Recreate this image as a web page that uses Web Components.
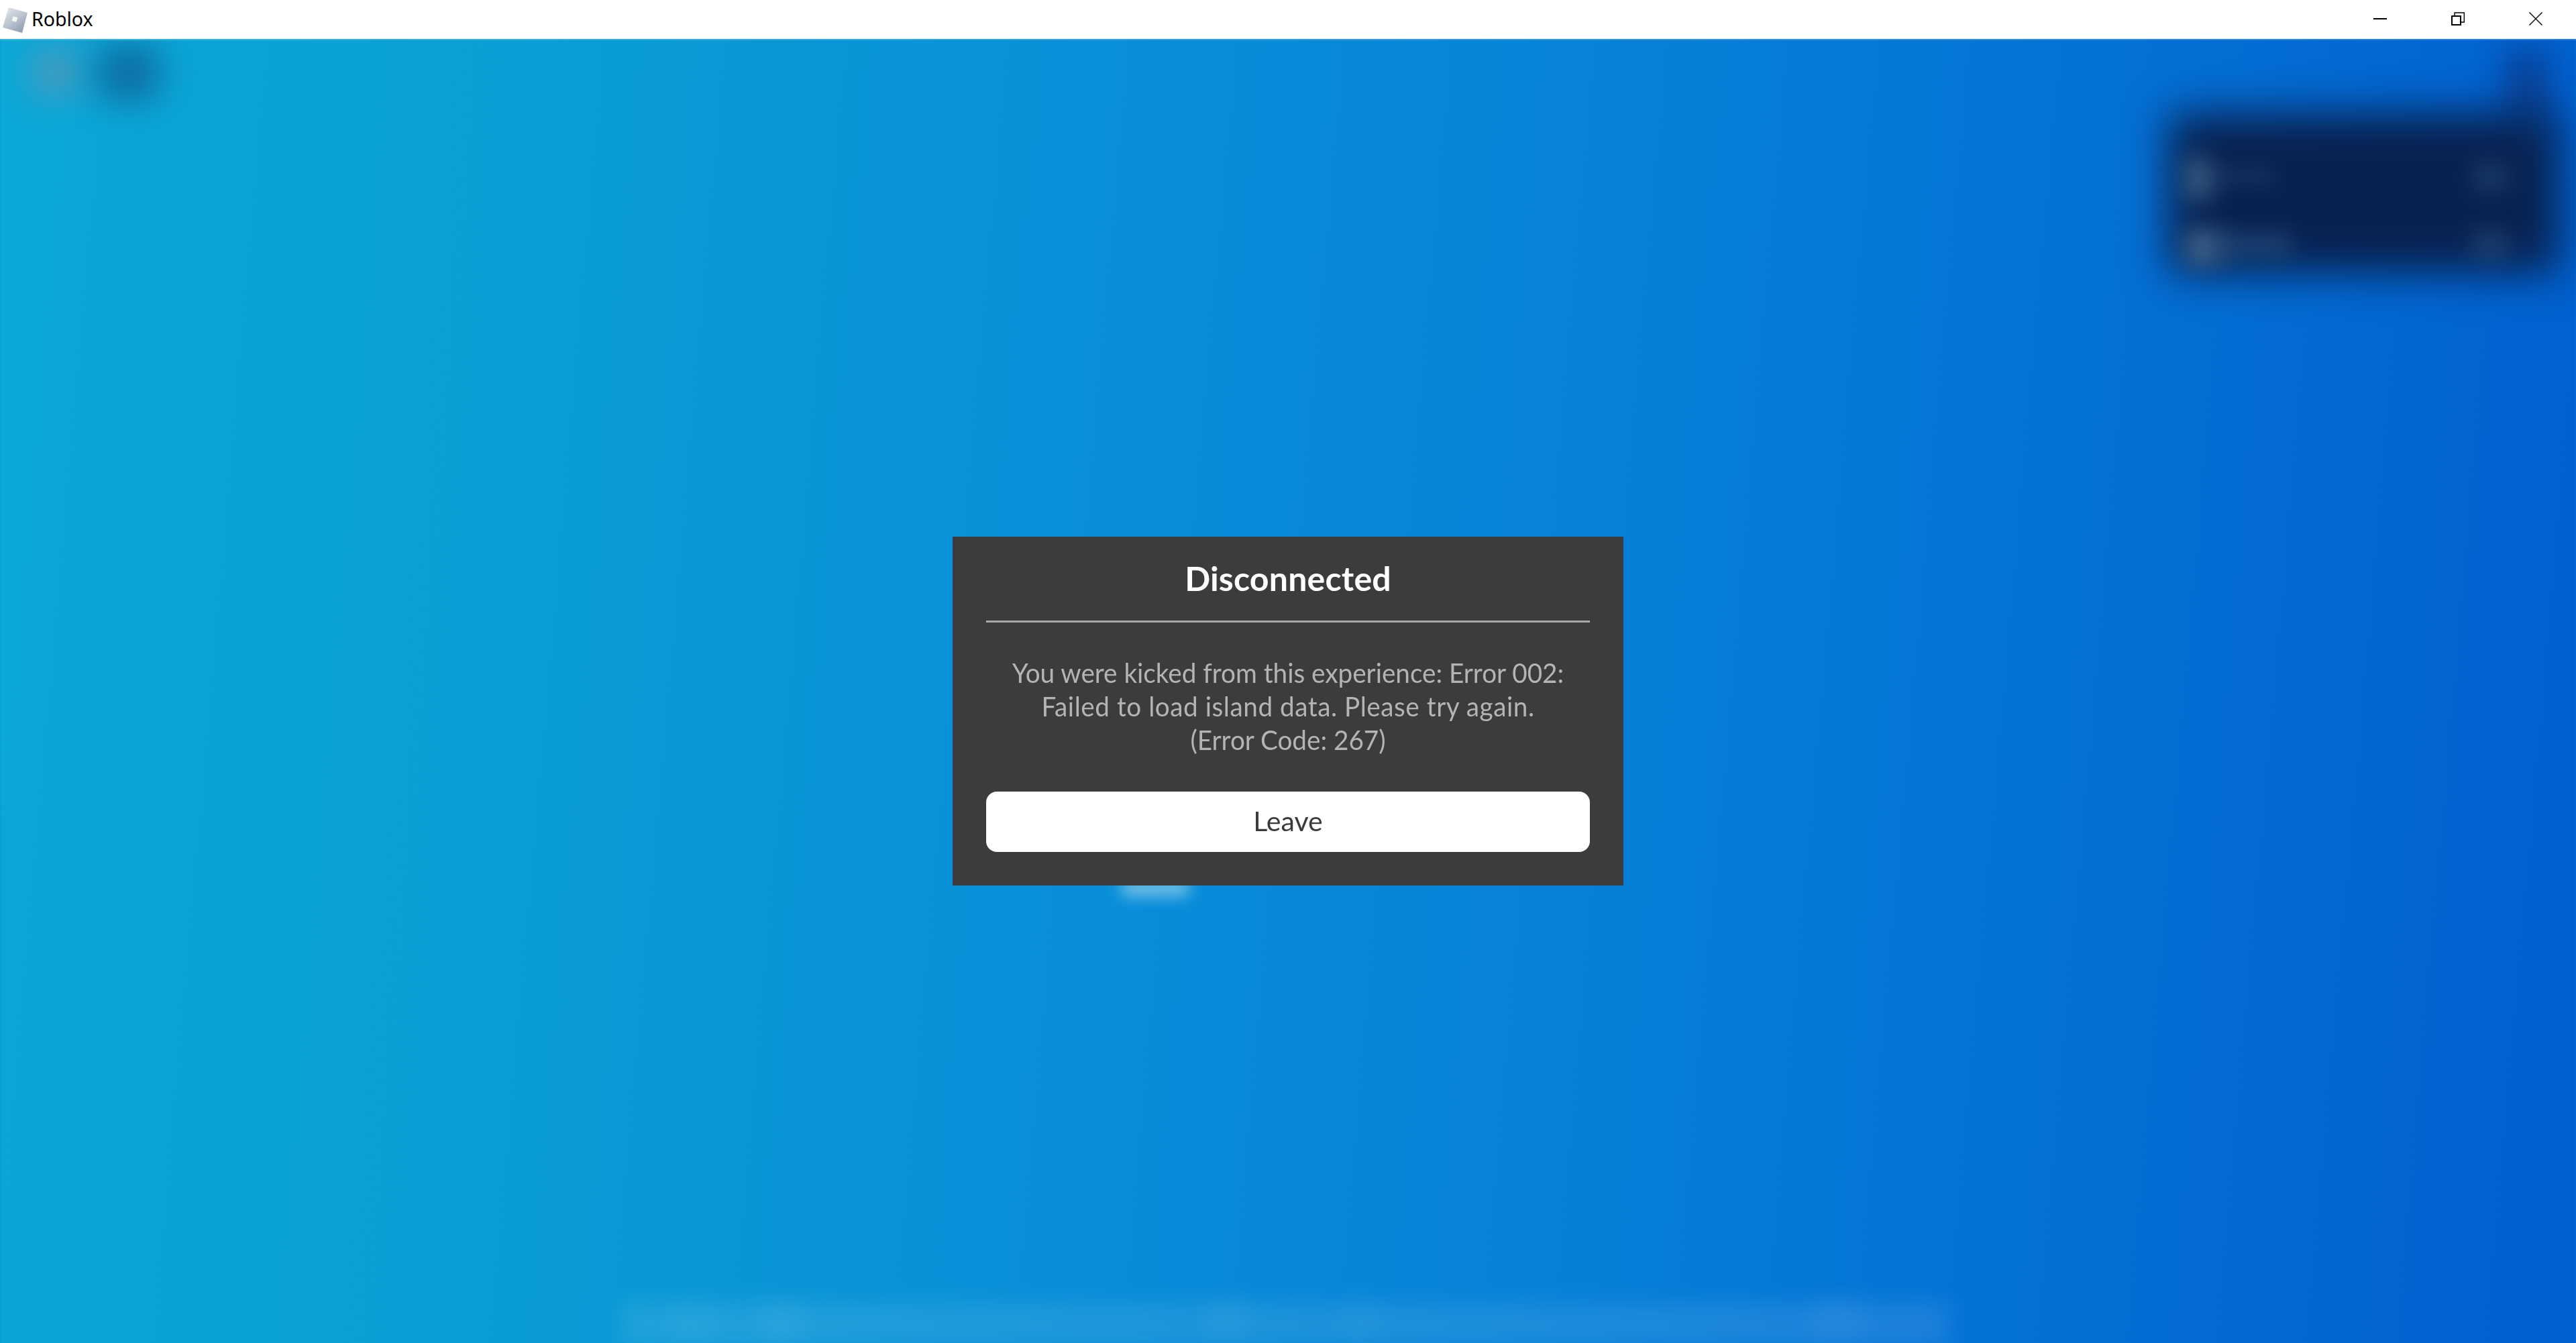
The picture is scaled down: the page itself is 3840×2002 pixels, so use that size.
<!DOCTYPE html>
<html lang="en"><head><meta charset="utf-8"><title>Roblox</title>
<style>html,body{margin:0;height:100%;background:#fff;overflow:hidden}</style></head>
<body>
<rbx-window>
  <rbx-titlebar slot="bar" title-text="Roblox"></rbx-titlebar>
  <rbx-gameview slot="view">
    <rbx-dialog heading="Disconnected" action="Leave">You were kicked from this experience: Error 002:<br><span style="letter-spacing:.58px">Failed to load island data. Please try again.</span><br>(Error Code: 267)</rbx-dialog>
  </rbx-gameview>
</rbx-window>
<script>
function def(name, html, init){
  customElements.define(name, class extends HTMLElement{
    constructor(){super();this.attachShadow({mode:'open'}).innerHTML=html;}
    connectedCallback(){if(init)init(this,this.shadowRoot);}
  });
}
def('rbx-window',`<style>
:host{display:flex;flex-direction:column;width:100%;height:100vh;overflow:hidden}
</style><slot name="bar"></slot><slot name="view"></slot>`);

def('rbx-titlebar',`<style>
:host{display:flex;align-items:center;flex:none;height:58px;background:#fff;box-sizing:border-box;padding:0 2px 0 3px;color:#000;
 font:28.5px "Noto Sans","Open Sans",sans-serif}
svg{display:block;flex:none}
.logo{margin-right:6px;margin-top:1px}
.t{flex:1;line-height:56px;height:58px}
.btns{display:flex;height:58px;align-items:center}
.btns div{width:116px;display:flex;justify-content:center;align-items:center;height:56px;margin-bottom:2px}
</style>
<svg class="logo" width="38" height="40" viewBox="0 0 38 40"><defs><linearGradient id="g" x1="0.1" y1="0" x2="0.75" y2="1"><stop offset="0" stop-color="#e4e7ec"/><stop offset=".55" stop-color="#b9c2ce"/><stop offset="1" stop-color="#8f9bac"/></linearGradient></defs>
<path d="M10 1 38 9 30 39 1 31Z" fill="url(#g)"/><rect x="15.5" y="15" width="7" height="7" transform="rotate(15 19 18.5)" fill="#f4f5f7"/></svg>
<div class="t"></div>
<div class="btns">
<div><svg width="20" height="20" viewBox="0 0 20 20"><path d="M0 10H20" stroke="#000" stroke-width="2"/></svg></div>
<div><svg width="20" height="20" viewBox="0 0 20 20" fill="none" stroke="#000"><rect x="1" y="6" width="13" height="13" stroke-width="2"/><path d="M5 5V1H19.300V15H15" stroke-width="1.400"/></svg></div>
<div><svg width="20" height="20" viewBox="0 0 20 20"><path d="M.5 .5 19.500 19.500M19.500 .5 .5 19.500" stroke="#111" stroke-width="1.500" fill="none"/></svg></div>
</div>`,(h,s)=>{s.querySelector('.t').textContent=h.getAttribute('title-text');});

def('rbx-blurred',`<style>
:host{position:absolute;inset:0;display:block;overflow:hidden;pointer-events:none}
i{position:absolute;display:block}
</style>
<i style="left:42px;top:10px;width:84px;height:76px;border-radius:50%;background:#6d93ad;opacity:.62;filter:blur(26px)"></i>
<i style="left:140px;top:2px;width:102px;height:92px;border-radius:50%;background:#0f6398;opacity:.9;filter:blur(28px)"></i>
<i style="left:3732px;top:12px;width:70px;height:120px;background:#0a3f92;opacity:.85;filter:blur(24px)"></i>
<i style="left:3232px;top:108px;width:584px;height:240px;background:#08214f;border-radius:6px;filter:blur(32px)"></i>
<i style="left:3256px;top:176px;width:44px;height:60px;background:#47698c;opacity:.75;filter:blur(17px)"></i>
<i style="left:3258px;top:282px;width:52px;height:54px;background:#47698c;opacity:.85;filter:blur(17px)"></i>
<i style="left:3300px;top:286px;width:115px;height:40px;background:#2b5382;opacity:.55;filter:blur(16px)"></i>
<i style="left:3306px;top:188px;width:85px;height:28px;background:#2b5382;opacity:.3;filter:blur(14px)"></i>
<i style="left:3686px;top:180px;width:54px;height:46px;background:#2f5682;opacity:.4;filter:blur(16px)"></i>
<i style="left:3686px;top:282px;width:54px;height:46px;background:#2f5682;opacity:.45;filter:blur(16px)"></i>
<i style="left:1672px;top:1250px;width:100px;height:26px;background:#9fd8ee;opacity:.7;filter:blur(11px)"></i>
<i style="left:925px;top:1882px;width:1980px;height:66px;background:#fff;opacity:.09;filter:blur(16px)"></i>
<i style="left:1000px;top:1878px;width:70px;height:66px;background:#fff;opacity:.025;filter:blur(16px)"></i>
<i style="left:1130px;top:1876px;width:70px;height:66px;background:#fff;opacity:.035;filter:blur(16px)"></i>
<i style="left:1800px;top:1872px;width:60px;height:70px;background:#fff;opacity:.03;filter:blur(16px)"></i>
<i style="left:2000px;top:1872px;width:60px;height:70px;background:#fff;opacity:.02;filter:blur(16px)"></i>
<i style="left:2700px;top:1872px;width:80px;height:70px;background:#fff;opacity:.03;filter:blur(16px)"></i>`);

def('rbx-gameview',`<style>
:host{position:relative;display:flex;flex:1;align-items:center;justify-content:center;overflow:hidden;
 background:linear-gradient(95deg,#0ba8d7 0%,#0a9fd5 18%,#088fd8 42%,#0680d7 62%,#0470d5 80%,#005ecf 100%);
 border-top:2px solid rgba(255,255,255,.18);box-sizing:border-box}
.d{position:relative;display:flex;margin-top:58px}
</style><rbx-blurred></rbx-blurred><div class="d"><slot></slot></div>`);

def('rbx-dialog',`<style>
:host{display:flex;flex-direction:column;width:1000px;height:520px;box-sizing:border-box;padding:0 50px;background:#3c3c3e;
 font-family:"Lato","Open Sans",sans-serif;text-align:center;filter:blur(.5px)}
h1{margin:0;height:125px;line-height:124px;font-size:50px;font-weight:700;color:#fff;border-bottom:3px solid #a9a9a9;flex:none;letter-spacing:.2px}
.m{flex:none;margin-top:50px;height:150px;font-size:41px;line-height:50px;color:#b4b4b4;white-space:nowrap;transform:scaleX(.943)}
.b{flex:none;margin-top:52px;height:90px;background:#fff;border-radius:16px;color:#393b3d;font-size:41px;line-height:88px}
</style><h1></h1><div class="m"><slot></slot></div><div class="b"></div>`,(h,s)=>{
  s.querySelector('h1').textContent=h.getAttribute('heading');
  s.querySelector('.b').textContent=h.getAttribute('action');
});
</script>
</body></html>
